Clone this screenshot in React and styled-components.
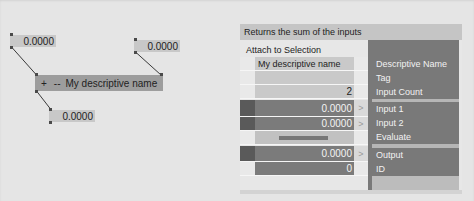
import React from 'react';
import styled, { createGlobalStyle } from 'styled-components';

const GlobalStyle = createGlobalStyle`
  html, body {
    margin: 0;
    padding: 0;
    background: #e5e5e5;
    font-family: "Liberation Sans", Arial, sans-serif;
  }
`;

const Screen = styled.div`
  width: 474px;
  height: 201px;
  display: flex;
  align-items: flex-start;
  box-shadow: inset 0 1px 2px rgba(0, 0, 0, 0.08);
  overflow: hidden;
`;

// free canvas for the node graph
const Canvas = styled.div`
  position: relative;
  width: 240px;
  height: 201px;
  flex-shrink: 0;
`;

const Wires = styled.svg`
  position: absolute;
  left: 0;
  top: 0;
  width: 240px;
  height: 201px;
`;

const Node = styled.div`
  position: absolute;
  box-sizing: border-box;
  height: ${(p) => (p.$main ? 16 : 12)}px;
  padding: 0 ${(p) => (p.$main ? 6 : 2)}px;
  display: flex;
  align-items: center;
  justify-content: ${(p) => (p.$main ? 'flex-start' : 'flex-end')};
  background: ${(p) => (p.$main ? '#9d9d9d' : '#c8c8c8')};
  color: #222;
  font-size: 10px;
  white-space: nowrap;
`;

const Pin = styled.span`
  position: absolute;
  width: 3px;
  height: 3px;
  background: #4a4a4a;
  left: ${(p) => (p.$right ? 'auto' : '0')};
  right: ${(p) => (p.$right ? '0' : 'auto')};
  top: ${(p) => (p.$bottom ? 'auto' : '-2px')};
  bottom: ${(p) => (p.$bottom ? '-2px' : 'auto')};
`;

const Glyph = styled.span`
  margin-right: ${(p) => p.$gap}px;
`;

const Panel = styled.div`
  margin-top: 24px;
  width: 222px;
  background: #e7e7e7;
  display: flex;
  flex-direction: column;
`;

const Title = styled.div`
  height: 16px;
  line-height: 16px;
  padding-left: 4px;
  background: #c5c5c5;
  color: #222;
  font-size: 9px;
`;

const Body = styled.div`
  display: grid;
  grid-template-columns: 128px 91px;
  padding-right: 3px;
`;

const LeftCol = styled.div`
  display: flex;
  flex-direction: column;
`;

const AttachRow = styled.div`
  height: 17px;
  line-height: 21px;
  padding-left: 6px;
  font-size: 9px;
  color: #222;
`;

const Row = styled.div`
  display: grid;
  grid-template-columns: 15px 99px 14px;
  height: ${(p) => p.$h || 14}px;
  border-bottom: 1px solid #f6f6f6;
  margin-top: ${(p) => p.$top || 0}px;
`;

const Square = styled.div`
  background: ${(p) => (p.$dark ? '#5a5a5a' : '#e9e9e9')};
`;

const Field = styled.div`
  display: flex;
  align-items: center;
  justify-content: ${(p) => (p.$left ? 'flex-start' : p.$center ? 'center' : 'flex-end')};
  padding: 0 ${(p) => (p.$left ? '0 0 3px' : '2px 0 0')};
  background: ${(p) => p.$bg};
  color: ${(p) => p.$color || '#222'};
  font-size: ${(p) => p.$size || 10}px;
  white-space: nowrap;
`;

const Bar = styled.div`
  width: 49px;
  height: 4px;
  background: #777;
`;

const Arrow = styled.div`
  display: flex;
  align-items: center;
  justify-content: center;
  background: ${(p) => (p.$on ? '#d9d9d9' : '#e9e9e9')};
  color: #9a9a9a;
  font-size: 9px;
`;

const Filler = styled.div`
  flex: 1;
`;

const RightCol = styled.div`
  background: #797979;
  display: flex;
  flex-direction: column;
  padding-top: 17px;
`;

const Label = styled.div`
  height: 14px;
  line-height: 14px;
  padding-left: 8px;
  color: #f2f2f2;
  font-size: 9px;
`;

const Divider = styled.div`
  height: ${(p) => p.$h}px;
  margin-left: 4px;
  background: #b6b6b6;
`;

const Tail = styled.div`
  height: 14px;
  margin-left: 4px;
  background: #bcbcbc;
`;

const Foot = styled.div`
  height: 4px;
  background: #d3d3d3;
`;

const valueNodes = [
  { left: 10, top: 35 },
  { left: 134, top: 40 },
  { left: 49, top: 110 },
];

export default function App() {
  return (
    <Screen>
      <GlobalStyle />
      <Canvas>
        <Wires viewBox="0 0 240 201">
          <g stroke="#3a3a3a" strokeWidth="1">
            <line x1="11.5" y1="47" x2="36.5" y2="75" />
            <line x1="135.5" y1="52" x2="161" y2="75" />
            <line x1="36.5" y1="91" x2="50.5" y2="109" />
          </g>
        </Wires>
        {valueNodes.map((n, i) => (
          <Node key={i} style={{ left: n.left, top: n.top, width: 46 }}>
            <Pin />
            <Pin $bottom />
            0.0000
          </Node>
        ))}
        <Node $main style={{ left: 35, top: 75, width: 128 }}>
          <Pin />
          <Pin $bottom />
          <Pin $right />
          <Glyph $gap={7}>+</Glyph>
          <Glyph $gap={5}>--</Glyph>
          My descriptive name
        </Node>
      </Canvas>

      <Panel>
        <Title>Returns the sum of the inputs</Title>
        <Body>
          <LeftCol>
            <AttachRow>Attach to Selection</AttachRow>
            <Row $h={13}>
              <Square />
              <Field $left $bg="#c9c9c9" $size={9}>My descriptive name</Field>
              <Arrow />
            </Row>
            <Row $h={13}>
              <Square />
              <Field $bg="#c9c9c9" />
              <Arrow />
            </Row>
            <Row $h={13}>
              <Square />
              <Field $bg="#c9c9c9">2</Field>
              <Arrow />
            </Row>
            <Row $top={1} $h={16}>
              <Square $dark />
              <Field $bg="#7b7b7b" $color="#f4f4f4">0.0000</Field>
              <Arrow $on>&gt;</Arrow>
            </Row>
            <Row $h={13}>
              <Square $dark />
              <Field $bg="#7b7b7b" $color="#f4f4f4">0.0000</Field>
              <Arrow $on>&gt;</Arrow>
            </Row>
            <Row $h={13}>
              <Square />
              <Field $center $bg="#c1c1c1"><Bar /></Field>
              <Arrow />
            </Row>
            <Row $top={1} $h={15}>
              <Square $dark />
              <Field $bg="#7b7b7b" $color="#f4f4f4">0.0000</Field>
              <Arrow $on>&gt;</Arrow>
            </Row>
            <Row $h={13}>
              <Square />
              <Field $bg="#7b7b7b" $color="#f4f4f4">0</Field>
              <Arrow />
            </Row>
            <Filler />
          </LeftCol>
          <RightCol>
            <Label>Descriptive Name</Label>
            <Label>Tag</Label>
            <Label>Input Count</Label>
            <Divider $h={3} />
            <Label>Input 1</Label>
            <Label>Input 2</Label>
            <Label>Evaluate</Label>
            <Divider $h={4} />
            <Label>Output</Label>
            <Label>ID</Label>
            <Tail />
          </RightCol>
        </Body>
        <Foot />
      </Panel>
    </Screen>
  );
}
